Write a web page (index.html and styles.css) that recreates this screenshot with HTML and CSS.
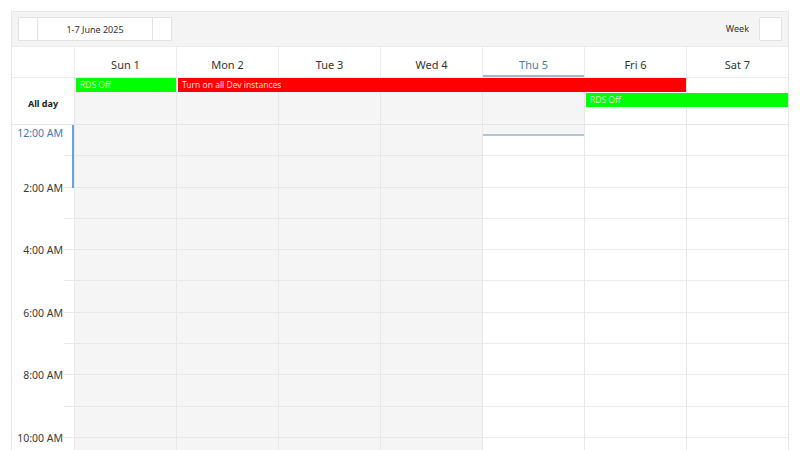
FILE: index.html
```html
<!DOCTYPE html>
<html lang="en">
<head>
    <meta charset="UTF-8">
    <title>Scheduler - Week</title>
    <link rel="stylesheet" href="styles.css">
</head>
<body>
    <div class="scheduler">
        <div class="toolbar">
            <div class="nav-group">
                <button class="nav-btn"></button>
                <button class="date-btn">1-7 June 2025</button>
                <button class="nav-btn"></button>
            </div>
            <div class="view-group">
                <span class="view-label">Week</span>
                <button class="view-btn"></button>
            </div>
        </div>

        <div class="head-row">
            <div class="corner"></div>
            <div class="day-head">Sun 1</div>
            <div class="day-head">Mon 2</div>
            <div class="day-head">Tue 3</div>
            <div class="day-head">Wed 4</div>
            <div class="day-head today">Thu 5</div>
            <div class="day-head">Fri 6</div>
            <div class="day-head">Sat 7</div>
        </div>

        <div class="allday-row">
            <div class="allday-label">All day</div>
            <div class="allday-grid">
                <div class="allday-cell past" style="grid-column: 1"></div>
                <div class="allday-cell past" style="grid-column: 2"></div>
                <div class="allday-cell past" style="grid-column: 3"></div>
                <div class="allday-cell past" style="grid-column: 4"></div>
                <div class="allday-cell past" style="grid-column: 5"></div>
                <div class="allday-cell" style="grid-column: 6"></div>
                <div class="allday-cell" style="grid-column: 7"></div>
                <div class="event green" style="grid-column: 1 / 2; grid-row: 1">RDS Off</div>
                <div class="event red" style="grid-column: 2 / 7; grid-row: 1">Turn on all Dev instances</div>
                <div class="event green" style="grid-column: 6 / 8; grid-row: 2">RDS Off</div>
            </div>
        </div>

        <div class="body-row">
            <div class="time-col">
                <div class="hour now"><span class="time-label first">12:00 AM</span></div>
                <div class="hour now"></div>
                <div class="hour"><span class="time-label">2:00 AM</span></div>
                <div class="hour"></div>
                <div class="hour"><span class="time-label">4:00 AM</span></div>
                <div class="hour"></div>
                <div class="hour"><span class="time-label">6:00 AM</span></div>
                <div class="hour"></div>
                <div class="hour"><span class="time-label">8:00 AM</span></div>
                <div class="hour"></div>
                <div class="hour"><span class="time-label">10:00 AM</span></div>
            </div>
            <div class="day-col past"></div>
            <div class="day-col past"></div>
            <div class="day-col past"></div>
            <div class="day-col past"></div>
            <div class="day-col today-col">
                <div class="past-part"></div>
                <div class="now-line"></div>
            </div>
            <div class="day-col"></div>
            <div class="day-col"></div>
        </div>
    </div>
</body>
</html>
```

FILE: styles.css
```css
body {
    margin: 0;
    padding: 0;
    font-family: "Noto Sans", "Open Sans", Arial, sans-serif;
    color: #333;
    background: #fff;
    overflow: hidden;
}
.scheduler {
    margin: 11px 0 0 11px;
    width: 778px;
    box-sizing: border-box;
    border: 1px solid #e6e6e6;
    border-bottom: none;
}
.toolbar {
    background-color: #f4f4f4;
    height: 35px;
    padding: 5px 6px 0 6px;
    box-sizing: border-box;
    display: flex;
    justify-content: space-between;
    align-items: flex-start;
    border-bottom: 1px solid #ececec;
}
.nav-group {
    display: flex;
}
button {
    font-family: inherit;
    background: #fff;
    border: 1px solid #e2e2e2;
    height: 24px;
    margin: 0;
    padding: 0;
    box-sizing: border-box;
    color: #333;
}
.nav-btn {
    width: 20px;
}
.date-btn {
    width: 114px;
    font-size: 9px;
    border-left: none;
    border-right: none;
}
.view-group {
    display: flex;
    align-items: center;
    gap: 10px;
}
.view-label {
    font-size: 9px;
    height: 24px;
    line-height: 24px;
}
.view-btn {
    width: 23px;
    border-radius: 2px;
}
.head-row {
    display: grid;
    grid-template-columns: 62px repeat(7, 102px);
    height: 31px;
    box-sizing: border-box;
    border-bottom: 1px solid #ececec;
}
.day-head {
    border-left: 1px solid #ececec;
    font-size: 11px;
    text-align: center;
    padding-top: 10px;
    box-sizing: border-box;
}
.day-head.today {
    color: #4a7fb0;
    box-shadow: inset 0 -2px 0 #aab6c4;
}
.allday-row {
    display: grid;
    grid-template-columns: 62px 714px;
    height: 47px;
    box-sizing: border-box;
    border-bottom: 1px solid #e6e6e6;
}
.allday-label {
    font-size: 9px;
    font-weight: bold;
    color: #222;
    display: flex;
    align-items: center;
    justify-content: center;
    padding-top: 4px;
}
.allday-grid {
    display: grid;
    grid-template-columns: repeat(7, 102px);
    grid-template-rows: 15px 15px 1fr;
}
.allday-cell {
    grid-row: 1 / 4;
    border-left: 1px solid #e6e6e6;
    background: #fff;
}
.allday-cell.past {
    background: #f5f5f5;
}
.event {
    height: 14px;
    margin: 0 0 1px 2px;
    font-size: 8.5px;
    line-height: 13px;
    padding-left: 4px;
    white-space: nowrap;
    overflow: hidden;
    z-index: 1;
}
.event.green {
    background: #00ff00;
    color: #d8ffd0;
}
.event.red {
    background: #ff0000;
    color: #ffdede;
}
.body-row {
    display: grid;
    grid-template-columns: 62px repeat(7, 102px);
}
.hour {
    height: 31.3px;
    box-sizing: border-box;
    background: linear-gradient(#e8e8e8, #e8e8e8) right bottom / 10px 1px no-repeat;
    font-size: 10.5px;
    text-align: right;
    padding-right: 11px;
}
.hour.now {
    box-shadow: inset -2px 0 0 #6aa3d4;
}
.time-label {
    display: inline-block;
    transform: translateY(-50%);
    background: #fff;
    padding-left: 2px;
    color: #3a3a3a;
}
.time-label.first {
    transform: none;
    margin-top: 1px;
    color: #3f7cb6;
}
.day-col {
    border-left: 1px solid #e8e8e8;
    background-color: #fff;
    background-image: repeating-linear-gradient(to bottom, transparent 0, transparent 30.3px, #ececec 30.3px, #ececec 31.3px);
}
.day-col.past {
    background-color: #f5f5f5;
    background-image: repeating-linear-gradient(to bottom, transparent 0, transparent 30.3px, #e8e8e8 30.3px, #e8e8e8 31.3px);
}
.past-part {
    height: 9px;
    background: #f5f5f5;
}
.now-line {
    height: 2px;
    background: #b3c6d2;
}
```
